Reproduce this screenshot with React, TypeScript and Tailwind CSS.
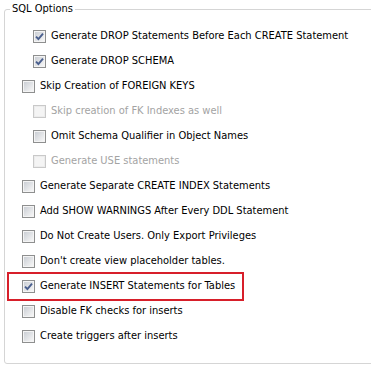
type Opt = {
  label: string
  checked?: boolean
  disabled?: boolean
  indent?: boolean
  highlight?: boolean
}

const options: Opt[] = [
  { label: 'Generate DROP Statements Before Each CREATE Statement', checked: true, indent: true },
  { label: 'Generate DROP SCHEMA', checked: true, indent: true },
  { label: 'Skip Creation of FOREIGN KEYS' },
  { label: 'Skip creation of FK Indexes as well', disabled: true, indent: true },
  { label: 'Omit Schema Qualifier in Object Names', indent: true },
  { label: 'Generate USE statements', disabled: true, indent: true },
  { label: 'Generate Separate CREATE INDEX Statements' },
  { label: 'Add SHOW WARNINGS After Every DDL Statement' },
  { label: 'Do Not Create Users. Only Export Privileges' },
  { label: "Don't create view placeholder tables." },
  { label: 'Generate INSERT Statements for Tables', checked: true, highlight: true },
  { label: 'Disable FK checks for inserts' },
  { label: 'Create triggers after inserts' },
]

/** Win7-ish classic checkbox, 13x13. */
function Box({ checked, disabled }: { checked?: boolean; disabled?: boolean }) {
  return (
    <span
      className={`flex h-[13px] w-[13px] shrink-0 items-center justify-center border ${
        disabled ? 'border-[#c9c9c9] bg-[#f6f6f6]' : 'border-[#8e8f8f] bg-white'
      }`}
    >
      <span
        className={`flex h-[11px] w-[11px] items-center justify-center border ${
          disabled
            ? 'border-[#ececec] bg-[#f4f4f4]'
            : 'border-[#f4f4f4] bg-gradient-to-br from-[#cbcfd5] to-[#f6f6f6]'
        }`}
      >
        {checked && (
          <svg width="9" height="9" viewBox="0 0 9 9">
            <path d="M1 4.6 L3.4 7 L8 1.6" fill="none" stroke="#4a5f8e" strokeWidth="1.9" />
          </svg>
        )}
      </span>
    </span>
  )
}

export default function App() {
  return (
    <div
      className="h-[372px] w-[371px] overflow-hidden bg-white text-[11px] text-black"
      style={{ fontFamily: '"DejaVu Sans Condensed", "DejaVu Sans", sans-serif' }}
    >
      <fieldset className="mx-0 ml-[4px] mt-[2px] h-[362px] w-[380px] rounded-[3px] border border-[#d5d5d5] p-0 pt-[8px]">
        <legend className="ml-[5px] px-[2px] leading-[14px]">SQL Options</legend>
        <div className="flex flex-col">
          {options.map((o) => (
            <div
              key={o.label}
              className={`relative flex h-[25px] items-center gap-[5px] ${o.indent ? 'pl-[28px]' : 'pl-[17px]'}`}
            >
              {o.highlight && (
                <span className="pointer-events-none absolute left-[2px] top-[-2px] h-[29px] w-[237px] border-2 border-[#d71f2a]" />
              )}
              <Box checked={o.checked} disabled={o.disabled} />
              <span className={o.disabled ? 'text-[#a3a3a3]' : ''}>{o.label}</span>
            </div>
          ))}
        </div>
      </fieldset>
    </div>
  )
}
